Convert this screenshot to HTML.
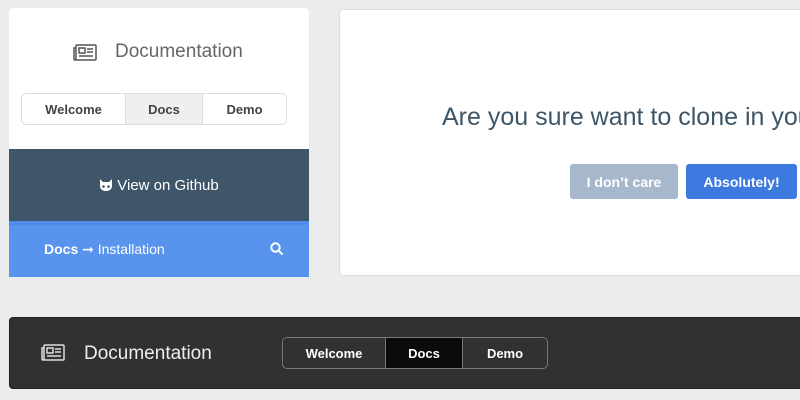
<!DOCTYPE html>
<html><head><style>
*{margin:0;padding:0;box-sizing:border-box}
body{width:800px;height:400px;background:#ececec;font-family:"Liberation Sans",sans-serif;position:relative;overflow:hidden}
.card{position:absolute;left:9px;top:8px;width:300px;height:269px;background:#fff;border-radius:5px 5px 0 0;overflow:hidden}
.title{position:absolute;top:33px;left:106px;font-size:19px;color:#666}
.tabs{position:absolute;display:flex;border:1px solid #ddd;border-radius:5px;overflow:hidden;font-weight:bold;font-size:13px;color:#444}
.tabs div{display:flex;align-items:center;justify-content:center;height:100%}
.gh{position:absolute;top:141px;left:0;width:300px;height:72px;background:#3f566a;color:#fff;font-size:15px;display:flex;align-items:center;justify-content:center}
.bc{position:absolute;top:213px;left:0;width:300px;height:56px;background:#5894ed;border-top:4px solid #4f8be8;color:#fff;font-size:14px}
.modal{position:absolute;left:339px;top:9px;width:480px;height:267px;background:#fff;border:1px solid #ddd;border-radius:4px}
.q{position:absolute;left:102px;top:93px;font-size:25px;color:#3d5566;white-space:nowrap}
.btn{position:absolute;top:154px;height:35px;border-radius:3px;color:#fff;font-weight:bold;font-size:14px;display:flex;align-items:center;justify-content:center}
.bar{position:absolute;left:9px;top:317px;width:800px;height:72px;background:#313131;border:1px solid #222;border-radius:4px 0 0 4px}
</style></head><body>
<div class="card">
  <svg style="position:absolute;left:64px;top:36px" width="24" height="17" viewBox="0 0 24 17" fill="none" stroke="#555" stroke-width="1.5"><rect x="3" y="1" width="20" height="15" rx="1"/><path d="M3 4H1v11a1 1 0 0 0 2 0"/><rect x="6" y="4" width="6" height="5"/><path d="M14 5h6M14 8h6M6 12h14"/></svg>
  <div class="title">Documentation</div>
  <div class="tabs" style="left:12px;top:85px;width:266px;height:32px">
    <div style="width:103px">Welcome</div>
    <div style="width:78px;background:#efefef;border-left:1px solid #ddd;border-right:1px solid #ddd">Docs</div>
    <div style="flex:1">Demo</div>
  </div>
  <div class="gh"><svg width="14" height="12" viewBox="0 0 14 12" style="margin-right:4px"><path d="M1 0l3 3h6l3-3v7a5 5 0 0 1-5 5H6a5 5 0 0 1-5-5z" fill="#fff"/><circle cx="4.5" cy="7.5" r="1.3" fill="#3f566a"/><circle cx="9.5" cy="7.5" r="1.3" fill="#3f566a"/></svg>View on Github</div>
  <div class="bc"><span style="position:absolute;left:35px;top:16px"><b>Docs</b> ➞ Installation</span>
  <svg style="position:absolute;left:261px;top:17px" width="14" height="14" viewBox="0 0 14 14" fill="none" stroke="#fff" stroke-width="2"><circle cx="5.5" cy="5.5" r="4.2"/><path d="M8.6 8.6L12.5 12.5"/></svg></div>
</div>
<div class="modal">
  <div class="q">Are you sure want to clone in your</div>
  <div class="btn" style="left:230px;width:108px;background:#a7b8cc">I don’t care</div>
  <div class="btn" style="left:346px;width:111px;background:#3d7ae0">Absolutely!</div>
</div>
<div class="bar">
  <svg style="position:absolute;left:31px;top:26px" width="24" height="17" viewBox="0 0 24 17" fill="none" stroke="#ddd" stroke-width="1.5"><rect x="3" y="1" width="20" height="15" rx="1"/><path d="M3 4H1v11a1 1 0 0 0 2 0"/><rect x="6" y="4" width="6" height="5"/><path d="M14 5h6M14 8h6M6 12h14"/></svg>
  <div style="position:absolute;left:74px;top:25px;font-size:19px;color:#eee">Documentation</div>
  <div class="tabs" style="left:272px;top:19px;width:266px;height:32px;border-color:#777;color:#fff">
    <div style="width:102px">Welcome</div>
    <div style="width:78px;background:#0b0b0b;border-left:1px solid #777;border-right:1px solid #777">Docs</div>
    <div style="flex:1">Demo</div>
  </div>
</div>
</body></html>
